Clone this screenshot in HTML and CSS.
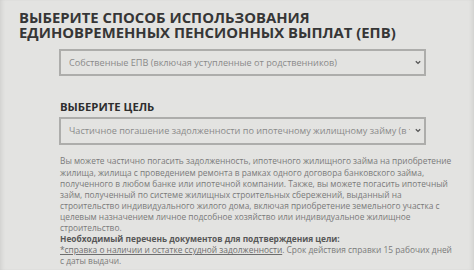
FILE: index.html
```html
<!DOCTYPE html>
<html lang="ru">
<head>
<meta charset="utf-8">
<link rel="stylesheet" href="styles.css">
</head>
<body>
<main class="page">
  <h1 class="title">Выберите способ использования<br>единовременных пенсионных выплат (ЕПВ)</h1>
  <div class="content">
    <div class="select">
      <span class="select-text">Собственные ЕПВ (включая уступленные от родственников)</span>
      <svg class="chevron" width="6" height="5" viewBox="0 0 6 5"><path d="M0.8 1.2 L3 3.4 L5.2 1.2" fill="none" stroke="#555" stroke-width="1.3"/></svg>
    </div>
    <h2 class="subtitle">Выберите цель</h2>
    <div class="select select-tall">
      <span class="select-text">Частичное погашение задолженности по ипотечному жилищному займу (в том числе с проведением ремонта)</span>
      <svg class="chevron" width="6" height="5" viewBox="0 0 6 5"><path d="M0.8 1.2 L3 3.4 L5.2 1.2" fill="none" stroke="#555" stroke-width="1.3"/></svg>
    </div>
    <div class="desc">
      <p>Вы можете частично погасить задолженность, ипотечного жилищного займа на приобретение<br>жилища, жилища с проведением ремонта в рамках одного договора банковского займа,<br>полученного в любом банке или ипотечной компании. Также, вы можете погасить ипотечный<br>займ, полученный по системе жилищных строительных сбережений, выданный на<br>строительство индивидуального жилого дома, включая приобретение земельного участка с<br>целевым назначением личное подсобное хозяйство или индивидуальное жилищное<br>строительство.</p>
      <p class="docs-title">Необходимый перечень документов для подтверждения цели:</p>
      <p><a class="doc-link" href="#">*справка о наличии и остатке ссудной задолженности</a>. Срок действия справки 15 рабочих дней<br>с даты выдачи.</p>
    </div>
  </div>
</main>
</body>
</html>
```

FILE: styles.css
```css
html, body {
  margin: 0;
  padding: 0;
}
body {
  width: 474px;
  height: 270px;
  overflow: hidden;
  background: #e3e3e1;
  font-family: "Open Sans", "Noto Sans", sans-serif;
  box-shadow: inset 4px 0 5px -3px rgba(0,0,0,0.10), inset -4px 0 5px -3px rgba(0,0,0,0.10);
}
.page {
  padding: 9.6px 0 0 19px;
}
.title {
  margin: 0;
  font-size: 14.85px;
  line-height: 15px;
  font-weight: 700;
  text-transform: uppercase;
  color: #363636;
}
.content {
  width: 367px;
  margin: 9.4px 0 0 40px;
}
.select {
  box-sizing: border-box;
  height: 27px;
  border: 2px solid #adadab;
  display: flex;
  align-items: center;
  padding: 0 3px 0 8px;
  gap: 5px;
}
.select-tall {
  height: 28px;
}
.select-text {
  flex: 1;
  overflow: hidden;
  white-space: nowrap;
  font-size: 9.15px;
  color: #8a8a8a;
}
.chevron {
  flex: none;
}
.subtitle {
  margin: 0;
  padding: 24px 0 3px 1px;
  font-size: 11.3px;
  line-height: 14px;
  font-weight: 700;
  text-transform: uppercase;
  color: #2e2e2e;
}
.desc {
  padding: 10.5px 0 0 1px;
  font-size: 8.35px;
  line-height: 11.1px;
  color: #7a7a7a;
  white-space: nowrap;
}
.desc p {
  margin: 0;
}
.docs-title {
  font-weight: 700;
  color: #575757;
}
.doc-link {
  color: #6e6e6e;
  text-decoration: underline;
}
```
